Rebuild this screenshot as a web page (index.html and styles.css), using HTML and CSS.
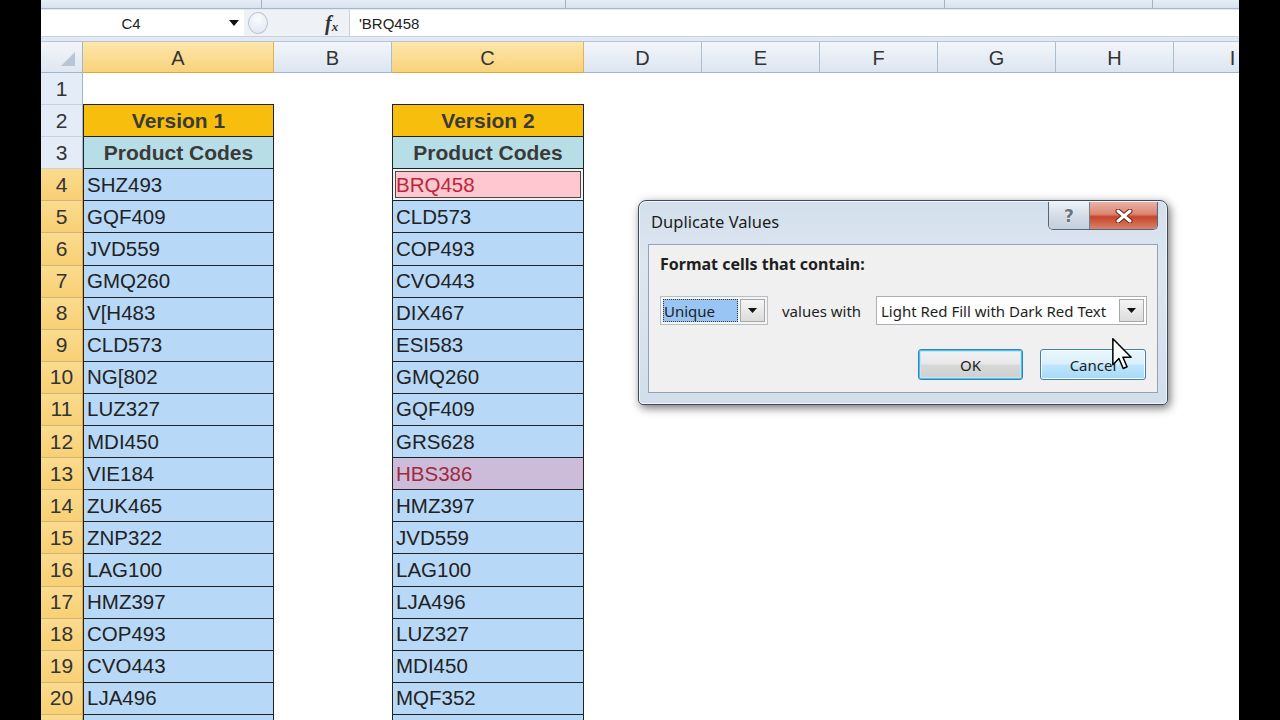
FILE: index.html
```html
<!DOCTYPE html>
<html lang="en">
<head>
<meta charset="utf-8">
<title>Duplicate Values</title>
<link rel="stylesheet" href="styles.css">
</head>
<body>
<div class="screen">
  <div class="edge"></div>
  <div class="app">
    <div class="ribbon">
      <span class="rseg s1"></span><span class="rseg s2"></span><span class="rseg s3"></span><span class="rseg s4"></span>
    </div>
    <div class="fzone">
      <div class="fbar">
        <div class="namebox">
          <span class="nb-text">C4</span>
          <svg class="nb-arrow" width="10" height="6" viewBox="0 0 10 6"><path d="M0 0H10L5 6Z" fill="#111"/></svg>
        </div>
        <div class="fmid">
          <span class="knob"></span>
          <span class="fx">f<sub>x</sub></span>
        </div>
        <div class="finput">'BRQ458</div>
      </div>
    </div>

    <div class="sheet">
      <div class="corner"><span class="tri"></span></div>
      <div class="ch on">A</div>
      <div class="ch">B</div>
      <div class="ch on">C</div>
      <div class="chrest"><div class="ch">D</div><div class="ch">E</div><div class="ch">F</div><div class="ch">G</div><div class="ch">H</div><div class="ch">I</div></div>

      <div class="rh">1</div><div class="cell cap"></div><div class="cell"></div><div class="cell cap"></div><div class="cell"></div>
      <div class="rh">2</div><div class="cell tbl ver">Version 1</div><div class="cell"></div><div class="cell tbl ver">Version 2</div><div class="cell"></div>
      <div class="rh">3</div><div class="cell tbl pc">Product Codes</div><div class="cell"></div><div class="cell tbl pc">Product Codes</div><div class="cell"></div>
      <div class="rh on">4</div><div class="cell tbl dat">SHZ493</div><div class="cell"></div><div class="cell tbl dup act">BRQ458</div><div class="cell"></div>
      <div class="rh on">5</div><div class="cell tbl dat">GQF409</div><div class="cell"></div><div class="cell tbl dat">CLD573</div><div class="cell"></div>
      <div class="rh on">6</div><div class="cell tbl dat">JVD559</div><div class="cell"></div><div class="cell tbl dat">COP493</div><div class="cell"></div>
      <div class="rh on">7</div><div class="cell tbl dat">GMQ260</div><div class="cell"></div><div class="cell tbl dat">CVO443</div><div class="cell"></div>
      <div class="rh on">8</div><div class="cell tbl dat">V[H483</div><div class="cell"></div><div class="cell tbl dat">DIX467</div><div class="cell"></div>
      <div class="rh on">9</div><div class="cell tbl dat">CLD573</div><div class="cell"></div><div class="cell tbl dat">ESI583</div><div class="cell"></div>
      <div class="rh on">10</div><div class="cell tbl dat">NG[802</div><div class="cell"></div><div class="cell tbl dat">GMQ260</div><div class="cell"></div>
      <div class="rh on">11</div><div class="cell tbl dat">LUZ327</div><div class="cell"></div><div class="cell tbl dat">GQF409</div><div class="cell"></div>
      <div class="rh on">12</div><div class="cell tbl dat">MDI450</div><div class="cell"></div><div class="cell tbl dat">GRS628</div><div class="cell"></div>
      <div class="rh on">13</div><div class="cell tbl dat">VIE184</div><div class="cell"></div><div class="cell tbl dupsel">HBS386</div><div class="cell"></div>
      <div class="rh on">14</div><div class="cell tbl dat">ZUK465</div><div class="cell"></div><div class="cell tbl dat">HMZ397</div><div class="cell"></div>
      <div class="rh on">15</div><div class="cell tbl dat">ZNP322</div><div class="cell"></div><div class="cell tbl dat">JVD559</div><div class="cell"></div>
      <div class="rh on">16</div><div class="cell tbl dat">LAG100</div><div class="cell"></div><div class="cell tbl dat">LAG100</div><div class="cell"></div>
      <div class="rh on">17</div><div class="cell tbl dat">HMZ397</div><div class="cell"></div><div class="cell tbl dat">LJA496</div><div class="cell"></div>
      <div class="rh on">18</div><div class="cell tbl dat">COP493</div><div class="cell"></div><div class="cell tbl dat">LUZ327</div><div class="cell"></div>
      <div class="rh on">19</div><div class="cell tbl dat">CVO443</div><div class="cell"></div><div class="cell tbl dat">MDI450</div><div class="cell"></div>
      <div class="rh on">20</div><div class="cell tbl dat">LJA496</div><div class="cell"></div><div class="cell tbl dat">MQF352</div><div class="cell"></div>
      <div class="rh on"></div><div class="cell tbl dat"></div><div class="cell"></div><div class="cell tbl dat"></div><div class="cell"></div>
    </div>

    <div class="dialog">
      <div class="titlebar">
        <span class="title">Duplicate Values</span>
        <div class="capbtns">
          <div class="helpbtn">?</div>
          <div class="closebtn">
            <svg width="18" height="14" viewBox="0 0 18 14"><path d="M3 2L15 12M15 2L3 12" stroke="#6b2418" stroke-width="5" stroke-linecap="round"/><path d="M3 2L15 12M15 2L3 12" stroke="#fff" stroke-width="3" stroke-linecap="round"/></svg>
          </div>
        </div>
      </div>
      <div class="client">
        <div class="prompt">Format cells that contain:</div>
        <div class="crow">
          <div class="combo combo-type">
            <span class="seltext">Unique</span>
            <span class="ddbtn"><svg width="9" height="5" viewBox="0 0 9 5"><path d="M0 0H9L4.5 5Z" fill="#111"/></svg></span>
          </div>
          <span class="lbl">values with</span>
          <div class="combo combo-fmt">
            <span class="val">Light Red Fill with Dark Red Text</span>
            <span class="ddbtn"><svg width="9" height="5" viewBox="0 0 9 5"><path d="M0 0H9L4.5 5Z" fill="#111"/></svg></span>
          </div>
        </div>
        <div class="brow">
          <button class="btn ok">OK</button>
          <button class="btn cancel">Cancel</button>
        </div>
      </div>
    </div>

    <svg class="cursor" width="20" height="32" viewBox="0 0 13 21"><path d="M0.5 0.5V17.5L4.5 13.5L7.3 20L9.8 18.9L7.1 12.6H12.5Z" fill="#fff" stroke="#000" stroke-width="1" stroke-linejoin="round"/></svg>
  </div>
  <div class="edge"></div>
</div>
</body>
</html>
```

FILE: styles.css
```css
html, body {
  margin: 0;
  background: #000;
}

.screen {
  display: flex;
  width: 1280px;
  height: 720px;
}

.edge {
  width: 41px;
  flex: none;
  background: #000;
}

.app {
  position: relative;
  width: 1198px;
  height: 720px;
  flex: none;
  overflow: hidden;
  background: #fff;
  display: flex;
  flex-direction: column;
  font-family: "Liberation Sans", Arial, sans-serif;
}

/* ribbon remnant */
.ribbon {
  height: 9px;
  box-sizing: border-box;
  flex: none;
  display: flex;
  background: linear-gradient(#e6edf6, #d8e2ef);
  border-bottom: 1px solid #a7b6c9;
}
.rseg { border-right: 1px solid #a3b3c6; }
.s1 { width: 220px; }
.s2 { width: 303px; }
.s3 { width: 378px; }
.s4 { width: 207px; }

/* formula bar */
.fzone {
  height: 33px;
  box-sizing: border-box;
  flex: none;
  background: #e2e9f2;
  border-bottom: 1px solid #b5c3d4;
  padding-top: 1px;
}
.fbar {
  height: 27px;
  display: flex;
  background: #fff;
  border-bottom: 1px solid #c7d1de;
  box-sizing: border-box;
}
.namebox {
  width: 203px;
  display: flex;
  align-items: center;
  background: #fff;
}
.nb-text {
  width: 180px;
  text-align: center;
  font-size: 15px;
  color: #222;
}
.nb-arrow { margin-left: 8px; }
.fmid {
  width: 106px;
  box-sizing: border-box;
  display: flex;
  align-items: center;
  background: #eef2f7;
  border-right: 1px solid #c9d2de;
}
.knob {
  width: 20px;
  height: 22px;
  margin-left: 4px;
  box-sizing: border-box;
  border-radius: 50%;
  border: 1px solid #bcc7d4;
  background: radial-gradient(circle at 50% 30%, #fafcfe, #dde4ee);
}
.fx {
  margin-left: 57px;
  font-family: "Liberation Serif", "Times New Roman", serif;
  font-style: italic;
  font-weight: bold;
  font-size: 20px;
  color: #333;
}
.fx sub {
  font-size: 13px;
  vertical-align: -1px;
}
.finput {
  flex: 1;
  display: flex;
  align-items: center;
  padding-left: 9px;
  font-size: 15px;
  color: #222;
}

/* sheet */
.sheet {
  display: grid;
  grid-template-columns: 42px 191px 118px 192px 655px;
  grid-template-rows: 31px repeat(21, 32.1px);
  flex: none;
}
.corner {
  background: linear-gradient(#f2f5fa, #dfe7f1);
  border-right: 1px solid #9eb6ce;
  border-bottom: 1px solid #9eb6ce;
  box-sizing: border-box;
  display: flex;
  justify-content: flex-end;
  align-items: flex-end;
  padding: 0 7px 6px 0;
}
.tri {
  width: 0;
  height: 0;
  border-left: 14px solid transparent;
  border-bottom: 14px solid #b8c5d4;
}
.ch {
  box-sizing: border-box;
  display: flex;
  align-items: center;
  justify-content: center;
  padding-top: 2px;
  font-size: 20px;
  color: #333;
  background: linear-gradient(#f3f6fb, #dce5f0);
  border-right: 1px solid #a9bdd3;
  border-bottom: 1px solid #9eb6ce;
}
.ch.on {
  background: linear-gradient(#fde7ab, #f8d27b);
  border-right-color: #e2b258;
  border-bottom-color: #e0a639;
}
.chrest {
  display: flex;
}
.chrest .ch {
  width: 118px;
  flex: none;
}

.rh {
  box-sizing: border-box;
  display: flex;
  align-items: center;
  justify-content: center;
  font-size: 21px;
  color: #333;
  background: #e4ecf7;
  border-right: 1px solid #9eb6ce;
  border-bottom: 1px solid #c6d3e3;
}
.rh.on {
  background: linear-gradient(#fbdb8f, #f8d074);
  border-right-color: #e0a73a;
  border-bottom-color: #d2b275;
}

.cell {
  box-sizing: border-box;
  display: flex;
  align-items: center;
  padding-left: 3px;
  white-space: nowrap;
  overflow: hidden;
  font-size: 20.5px;
  color: #222;
}
.cap { border-bottom: 1px solid #222; }
.tbl {
  border-left: 1px solid #222;
  border-right: 1px solid #222;
  border-bottom: 1px solid #222;
}
.ver {
  background: #f8be0e;
  font-weight: bold;
  font-size: 21px;
  color: #3a3a3a;
  justify-content: center;
  padding: 0;
}
.pc {
  background: #b7dde7;
  font-weight: bold;
  font-size: 21px;
  color: #3a3a3a;
  justify-content: center;
  padding: 0;
}
.dat { background: #b8d8f8; }
.dup {
  background: #ffc7cf;
  color: #b9283a;
}
.act {
  box-shadow: inset 0 0 0 2px #f2f2f2, inset 0 0 0 3px #4a4a4a;
}
.dupsel {
  background: #cdbcd9;
  color: #a02a3e;
}

/* dialog */
.dialog {
  position: absolute;
  left: 597px;
  top: 200px;
  width: 530px;
  height: 205px;
  box-sizing: border-box;
  border: 1px solid #3d4a5b;
  border-radius: 8px 8px 5px 5px;
  background: linear-gradient(#d3dfec, #dce6f1 30%, #d2deea);
  box-shadow: 0 0 0 1px rgba(255,255,255,0.7) inset, 2px 3px 10px rgba(0,0,0,0.55);
  padding: 0 9px 11px 9px;
  display: flex;
  flex-direction: column;
  font-family: "Noto Sans", "Open Sans", sans-serif;
}
.titlebar {
  height: 43px;
  flex: none;
  display: flex;
  justify-content: space-between;
  align-items: flex-start;
}
.title {
  margin-top: 9px;
  padding-left: 3px;
  font-size: 16.5px;
  color: #1c1c1c;
}
.capbtns {
  display: flex;
  margin-top: 1px;
  border: 1px solid #55657a;
  border-top: none;
  border-radius: 0 0 5px 5px;
  overflow: hidden;
  height: 28px;
  box-sizing: border-box;
}
.helpbtn {
  width: 40px;
  display: flex;
  align-items: center;
  justify-content: center;
  background: linear-gradient(#eef2f7, #d4dde8 50%, #c3cfdc);
  border-right: 1px solid #6e7d90;
  font-family: "DejaVu Sans", sans-serif;
  font-weight: bold;
  font-size: 17px;
  color: #6b7483;
  text-shadow: 0 0 2px #fff;
}
.closebtn {
  width: 67px;
  display: flex;
  align-items: center;
  justify-content: center;
  background: linear-gradient(#eab2a5, #dc8672 45%, #c7452c 55%, #d9826b);
}
.client {
  flex: 1;
  background: #f0f0f0;
  border: 1px solid #8fa3b9;
  padding: 9px 10px 0 11px;
  display: flex;
  flex-direction: column;
}
.prompt {
  font-weight: bold;
  font-size: 16px;
  color: #1e1e1e;
  line-height: 20px;
}
.crow {
  margin-top: 22px;
  display: flex;
  align-items: center;
  font-size: 15px;
  color: #1e1e1e;
  white-space: nowrap;
}
.combo {
  height: 29px;
  flex: none;
  box-sizing: border-box;
  display: flex;
  align-items: center;
  border: 1px solid #b9bec6;
  padding: 2px;
}
.combo-type {
  width: 108px;
  background: #f4f4f4;
}
.seltext {
  width: 75px;
  height: 23px;
  box-sizing: border-box;
  display: flex;
  align-items: center;
  background: #98c5f4;
  outline: 1px dotted #3a3a3a;
  outline-offset: -1px;
  padding-left: 1px;
}
.ddbtn {
  width: 25px;
  height: 23px;
  flex: none;
  margin-left: 2px;
  box-sizing: border-box;
  display: flex;
  align-items: center;
  justify-content: center;
  border: 1px solid #a7a7a7;
  background: linear-gradient(#f5f5f5, #dcdcdc);
}
.lbl {
  flex: none;
  margin-left: 14px;
  width: 80px;
}
.combo-fmt {
  margin-left: 14px;
  width: 271px;
  background: #fff;
  border-color: #abb0b8;
}
.val {
  flex: 1;
  padding-left: 2px;
  overflow: hidden;
}
.brow {
  margin-top: 24px;
  display: flex;
  justify-content: flex-end;
  gap: 17px;
}
.btn {
  width: 106px;
  height: 31px;
  box-sizing: border-box;
  border-radius: 3px;
  font-family: "Noto Sans", "Open Sans", sans-serif;
  font-size: 15px;
  color: #1e1e1e;
  padding: 0;
}
.ok {
  width: 105px;
  border: 1px solid #3c7fb1;
  background: linear-gradient(#f3f3f3, #e8e8e8 48%, #d8d8d8 52%, #cfcfcf);
  box-shadow: inset 0 0 0 1px #48c3ee, inset 0 0 0 2px #bfe9f8;
}
.cancel {
  border: 1px solid #3c7fb1;
  background: linear-gradient(#eaf6fd, #d9f0fc 48%, #bee6fd 52%, #a7d9f5);
  box-shadow: inset 0 0 0 1px #fff;
  margin-right: 1px;
}

.cursor {
  position: absolute;
  left: 1071px;
  top: 338px;
}
```
